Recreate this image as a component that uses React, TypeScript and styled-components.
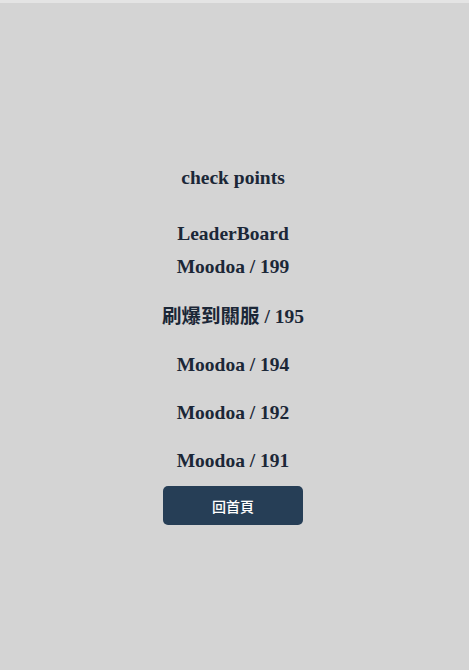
import React from "react";
import styled, { createGlobalStyle } from "styled-components";

const Global = createGlobalStyle`
  html, body {
    margin: 0;
    padding: 0;
    background: #d4d4d4;
  }
  body {
    border-top: 3px solid #e4e4e4;
    min-height: 667px;
    font-family: "Liberation Serif", "Noto Sans CJK TC", serif;
  }
`;

const Page = styled.main`
  display: flex;
  flex-direction: column;
  align-items: center;
  padding: 164px 3px 0 0;
  color: #1b2737;
`;

const Title = styled.h3`
  margin: 0 0 34px;
  font-size: 19.5px;
  line-height: 22px;
  font-weight: 700;
`;

const BoardTitle = styled.h3`
  margin: 0 0 11px;
  font-size: 19.5px;
  line-height: 22px;
  font-weight: 700;
`;

const List = styled.ol`
  list-style: none;
  margin: 0;
  padding: 0;
  display: flex;
  flex-direction: column;
  align-items: center;
  gap: 26px;
`;

const Row = styled.li<{ $tall?: boolean }>`
  font-size: 19.5px;
  line-height: 22px;
  font-weight: 700;
  white-space: nowrap;
  padding-top: ${(p) => (p.$tall ? "2px" : "0")};
`;

const HomeButton = styled.button`
  margin-top: 14px;
  width: 140px;
  height: 39px;
  border: none;
  border-radius: 5px;
  background: #263e56;
  color: #ffffff;
  font-family: "Noto Sans CJK TC", "Noto Sans", sans-serif;
  font-size: 14px;
  font-weight: 500;
  cursor: pointer;
`;

const entries = [
  { name: "Moodoa", score: 199 },
  { name: "刷爆到關服", score: 195, cjk: true },
  { name: "Moodoa", score: 194 },
  { name: "Moodoa", score: 192 },
  { name: "Moodoa", score: 191 },
];

export default function App() {
  return (
    <>
      <Global />
      <Page>
        <Title>check points</Title>
        <BoardTitle>LeaderBoard</BoardTitle>
        <List>
          {entries.map((e, i) => (
            <Row key={i} $tall={e.cjk}>
              {e.name} / {e.score}
            </Row>
          ))}
        </List>
        <HomeButton>回首頁</HomeButton>
      </Page>
    </>
  );
}
